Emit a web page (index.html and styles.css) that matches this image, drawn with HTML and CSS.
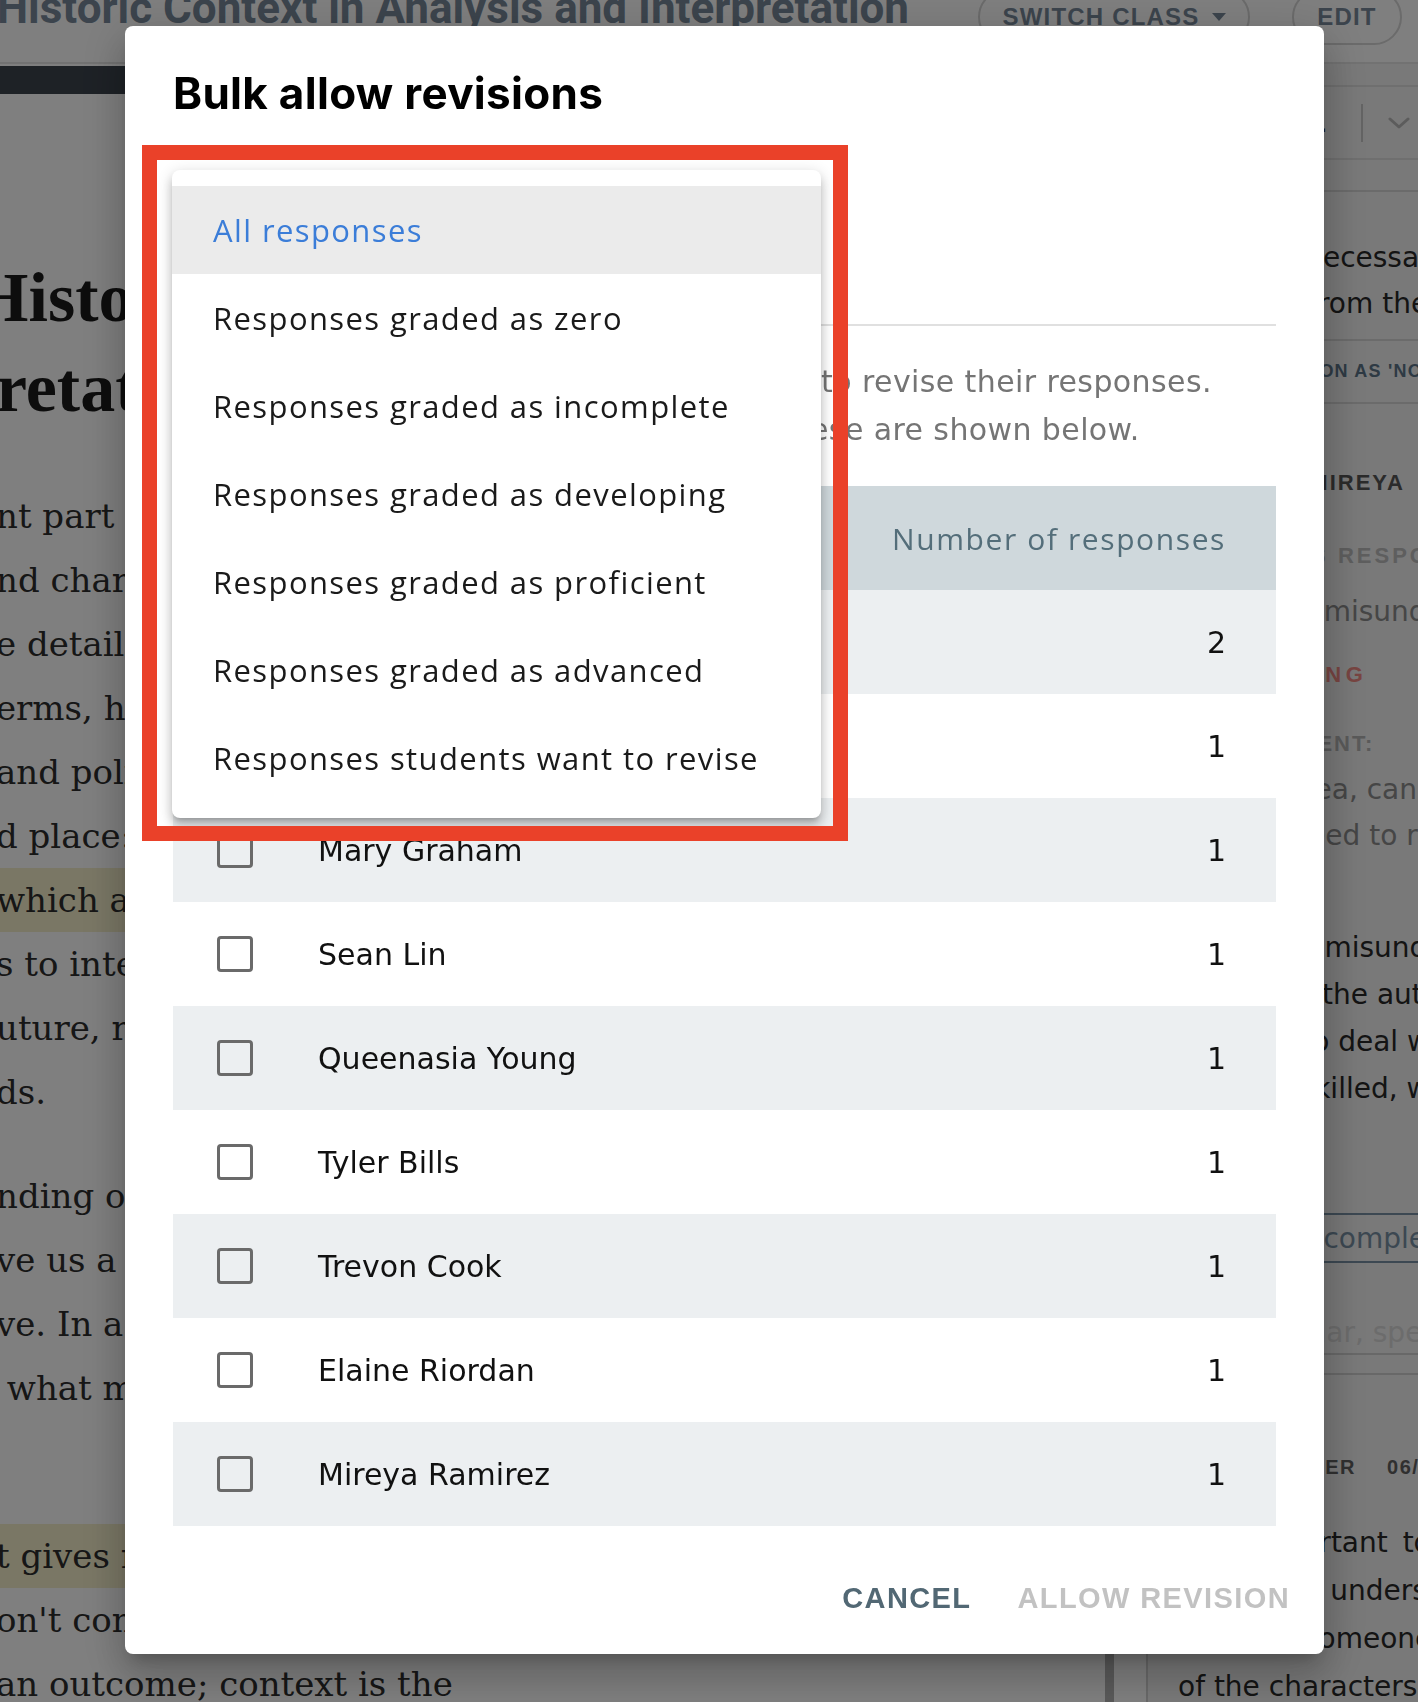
FILE: index.html
```html
<!DOCTYPE html>
<html lang="en">
<head>
<meta charset="UTF-8">
<meta name="viewport" content="width=device-width, initial-scale=1.0">
<title>Bulk allow revisions</title>
<link rel="stylesheet" href="styles.css">
</head>
<body>

<div class="page">
  <header class="topbar">
    <h2 class="course-title">Historic Context in Analysis and Interpretation</h2>
    <div class="top-actions">
      <button class="pill pill-switch">SWITCH CLASS
        <svg class="caret" width="14" height="8" viewBox="0 0 14 8"><path d="M0 0 L14 0 L7 8 Z" fill="currentColor"/></svg>
      </button>
      <button class="pill pill-edit">EDIT</button>
    </div>
  </header>

  <div class="workspace">
    <main class="reader">
      <div class="reader-bar"></div>
      <article class="article">
        <h1 class="article-title">
          <span class="cut">Historic Context in Analysis and Interp</span>
          <span>retation</span>
        </h1>
        <p>
          <span class="ln">nt part of understanding any story is knowing when</span>
          <span class="ln">nd characters exist within a particular moment in</span>
          <span class="ln">e details of setting can be broad, in general</span>
          <span class="ln">erms, historical events, the social customs,</span>
          <span class="ln">and political climate of the period. They can</span>
          <span class="ln">d place: a specific town, a house, a single room</span>
          <span class="ln mark">which a character lives or works. Knowing this</span>
          <span class="ln">s to interpret a character's choices, hopes, and</span>
          <span class="ln">uture, rather than judging them only by our</span>
          <span class="ln">ds.</span>
        </p>
        <p class="para-2">
          <span class="ln">nding of historical context can also</span>
          <span class="ln">ve us a better sense of what is at stake</span>
          <span class="ln">ve. In a story set during wartime, for</span>
          <span class="ln">&nbsp;what might seem strange to a modern</span>
        </p>
        <p class="para-3">
          <span class="ln mark">t gives meaning to the events of a story</span>
          <span class="ln">on't consider context, we might see only</span>
          <span class="ln">an outcome; context is the</span>
        </p>
      </article>
    </main>
    <div class="scroll-track"></div>
    <aside class="panel">
      <div class="panel-tabs"></div>
      <div class="panel-toolbar">
        <div class="panel-select"><span>Responses to this reading.</span></div>
        <span class="panel-divider"></span>
        <svg class="chevron" width="22" height="12" viewBox="0 0 22 12"><path d="M2 2 L11 10 L20 2" fill="none" stroke="currentColor" stroke-width="3" stroke-linecap="round" stroke-linejoin="round"/></svg>
      </div>
      <div class="panel-band"></div>
      <div class="panel-body">
        <div class="pb-text intro">
          <span class="ln">It was unnecessary for the author to</span>
          <span class="ln">far away from the main point of the</span>
        </div>
        <div class="flag-row">SET SUBMISSION AS 'NOT STARTED'</div>
        <div class="pb-caps reply">REPLY TO MIREYA</div>
        <div class="pb-caps label-light">STUDENT'S RESPONSE</div>
        <div class="pb-text muted answer">Has a key misunderstanding of the</div>
        <div class="pb-caps grade">DEVELOPING</div>
        <div class="pb-caps label-comment">ADD COMMENT:</div>
        <div class="pb-text muted comment">
          <span class="ln">A great idea, can you add more?</span>
          <span class="ln">You will need to revise this part.</span>
        </div>
        <div class="pb-text answer-body">
          <span class="ln">There is a misunderstanding here</span>
          <span class="ln">regarding the author's purpose</span>
          <span class="ln">and had to deal with the</span>
          <span class="ln">would be killed, which shows</span>
        </div>
        <div class="status-box">Marked incomplete</div>
        <div class="note-input">Fix grammar, spelling...</div>
        <div class="note-line"></div>
        <div class="pb-caps teacher">YOUR TEACHER <span class="date">06/12/2020</span></div>
        <div class="pb-text feedback">
          <span class="ln wide">It is important to think</span>
          <span class="ln">readers to understand</span>
          <span class="ln">because someone</span>
          <span class="ln">of the characters and</span>
        </div>
      </div>
    </aside>
  </div>
</div>

<div class="scrim">
  <div class="dialog">
    <div class="dialog-body">
      <h2 class="dialog-title">Bulk allow revisions</h2>
      <div class="field">
        <div class="field-label">Show</div>
        <div class="field-value">All responses</div>
      </div>
      <p class="dialog-desc">Choose which students you want to allow to revise their responses.<br>Students having responses that match these are shown below.</p>
      <table class="students">
        <thead>
          <tr>
            <th class="col-check"><span class="box"></span></th>
            <th>Student</th>
            <th class="col-count">Number of responses</th>
          </tr>
        </thead>
        <tbody>
          <tr><td class="col-check"><span class="box"></span></td><td>Jamal Carter</td><td class="col-count">2</td></tr>
          <tr><td class="col-check"><span class="box"></span></td><td>Ana Lopez</td><td class="col-count">1</td></tr>
          <tr><td class="col-check"><span class="box"></span></td><td>Mary Graham</td><td class="col-count">1</td></tr>
          <tr><td class="col-check"><span class="box"></span></td><td>Sean Lin</td><td class="col-count">1</td></tr>
          <tr><td class="col-check"><span class="box"></span></td><td>Queenasia Young</td><td class="col-count">1</td></tr>
          <tr><td class="col-check"><span class="box"></span></td><td>Tyler Bills</td><td class="col-count">1</td></tr>
          <tr><td class="col-check"><span class="box"></span></td><td>Trevon Cook</td><td class="col-count">1</td></tr>
          <tr><td class="col-check"><span class="box"></span></td><td>Elaine Riordan</td><td class="col-count">1</td></tr>
          <tr><td class="col-check"><span class="box"></span></td><td>Mireya Ramirez</td><td class="col-count">1</td></tr>
        </tbody>
      </table>
    </div>
    <div class="dialog-actions">
      <button class="text-btn btn-cancel">CANCEL</button>
      <button class="text-btn btn-allow" disabled>ALLOW REVISION</button>
    </div>

    <ul class="menu">
      <li class="active">All responses</li>
      <li>Responses graded as zero</li>
      <li>Responses graded as incomplete</li>
      <li>Responses graded as developing</li>
      <li>Responses graded as proficient</li>
      <li>Responses graded as advanced</li>
      <li>Responses students want to revise</li>
    </ul>
    <div class="callout"></div>
  </div>
</div>

</body>
</html>
```

FILE: styles.css
```css
* {
  box-sizing: border-box;
}
html, body {
  margin: 0;
  padding: 0;
}
body {
  width: 1418px;
  height: 1702px;
  overflow: hidden;
  background: #fff;
  font-family: "DejaVu Sans", sans-serif;
}

/* page behind the dialog */
.topbar {
  display: flex;
  align-items: flex-start;
  justify-content: space-between;
  margin-top: -20px;
  height: 84px;
  padding-right: 16px;
  border-bottom: 2px solid #e4e4e4;
}
.course-title {
  margin: 0 0 0 -3px;
  font: 700 44px/56px Roboto, sans-serif;
  color: #78899a;
  white-space: nowrap;
}
.top-actions {
  display: flex;
  gap: 42px;
  margin-top: 9px;
}
.pill {
  display: flex;
  align-items: center;
  justify-content: center;
  gap: 12px;
  height: 56px;
  border: 2px solid #d6d6d6;
  border-radius: 28px;
  background: none;
  font: 700 24px "Liberation Sans", sans-serif;
  letter-spacing: 1.2px;
  color: #78899a;
  padding: 0;
}
.pill-switch {
  width: 272px;
}
.pill-edit {
  width: 110px;
}

.workspace {
  display: flex;
  height: 1638px;
}
.reader {
  width: 1105px;
  flex: none;
  overflow: hidden;
}
.reader-bar {
  height: 28px;
  margin-top: 2px;
  background: #3c444d;
}
.article {
  margin-left: -4px;
  font: 34px/64px "DejaVu Serif", serif;
  color: #2d2d2d;
}
.article-title {
  margin: 159px 0 51px;
  font: 700 70px/90px "Liberation Serif", serif;
  color: #1a1a1a;
}
.article-title span {
  display: block;
  white-space: nowrap;
}
.article-title .cut {
  margin-left: -22px;
}
.article p {
  margin: 0;
}
.article .para-2 {
  margin-top: 40px;
}
.article .para-3 {
  margin-top: 104px;
}
.ln {
  display: block;
  white-space: nowrap;
}
.mark {
  background: #f5efcb;
}
.scroll-track {
  width: 9px;
  flex: none;
  background: #b4b4b4;
}

.panel {
  flex: 1;
  min-width: 0;
  margin-left: 32px;
  border-left: 2px solid #d2d2d2;
  background: #f2f2f2;
  overflow: hidden;
}
.panel-tabs {
  height: 23px;
  border-bottom: 2px solid #dedede;
}
.panel-toolbar {
  display: flex;
  align-items: center;
  height: 73px;
  padding-right: 8px;
  border-bottom: 2px solid #dedede;
  color: #282828;
  font-size: 28px;
}
.panel-select {
  flex: 1;
  min-width: 0;
  display: flex;
  justify-content: flex-end;
  white-space: nowrap;
}
.panel-select span {
  flex: none;
}
.panel-divider {
  flex: none;
  width: 2px;
  height: 38px;
  margin: 0 25px 0 33px;
  background: #c8c8c8;
}
.chevron {
  flex: none;
  color: #b8b8b8;
}
.panel-band {
  height: 32px;
  border-bottom: 2px solid #d6d6d6;
}
.panel-body {
  padding-left: 30px;
  white-space: nowrap;
}
.pb-text {
  font-size: 28px;
  line-height: 46px;
  color: #282828;
}
.pb-text.muted {
  color: #8c8c8c;
}
.pb-caps {
  font: 700 22px/30px "Liberation Sans", sans-serif;
  letter-spacing: 2px;
}
.intro {
  margin-top: 43px;
}
.flag-row {
  margin-top: 12px;
  height: 65px;
  display: flex;
  align-items: center;
  border-top: 2px solid #d6d6d6;
  border-bottom: 2px solid #d6d6d6;
  font: 700 18px "Liberation Sans", sans-serif;
  letter-spacing: 1.2px;
  color: #5c7488;
  margin-left: -30px;
  padding-left: 30px;
}
.reply {
  margin-top: 64px;
  color: #565656;
}
.label-light {
  margin-top: 43px;
  color: #bcbcbc;
  letter-spacing: 3px;
}
.answer {
  margin-top: 18px;
}
.grade {
  margin-top: 25px;
  color: #f08a84;
  letter-spacing: 4.5px;
}
.label-comment {
  margin-top: 39px;
  color: #b4b4b4;
}
.comment {
  margin-top: 8px;
}
.answer-body {
  margin-top: 65px;
  line-height: 47px;
}
.status-box {
  margin-top: 101px;
  height: 50px;
  display: flex;
  align-items: center;
  padding-left: 8px;
  border-top: 2px solid #7890a4;
  border-bottom: 2px solid #7890a4;
  font-size: 28px;
  color: #7890a4;
}
.note-input {
  margin-top: 50px;
  height: 42px;
  line-height: 40px;
  border-bottom: 2px solid #d0d0d0;
  font-size: 28px;
  color: #d8d8d8;
}
.note-line {
  margin-top: 18px;
  height: 2px;
  background: #d0d0d0;
}
.teacher {
  margin-top: 77px;
  font-size: 20px;
  letter-spacing: 1.5px;
  color: #606060;
}
.teacher .date {
  margin-left: 24px;
}
.feedback {
  margin-top: 37px;
  line-height: 48px;
}
.feedback .wide {
  word-spacing: 6px;
}

/* dialog */
.scrim {
  position: fixed;
  top: 0;
  left: 0;
  right: 0;
  bottom: 0;
  background: rgba(0, 0, 0, 0.5);
  display: flex;
  align-items: flex-start;
}
.dialog {
  position: relative;
  width: 1199px;
  height: 1628px;
  margin: 26px 0 0 125px;
  background: #fff;
  border-radius: 8px;
  box-shadow: 0 11px 15px -7px rgba(0, 0, 0, 0.2), 0 24px 38px 3px rgba(0, 0, 0, 0.14), 0 9px 46px 8px rgba(0, 0, 0, 0.12);
}
.dialog-body {
  padding: 43px 48px 0;
}
.dialog-title {
  margin: 0;
  font: 700 44px/48px Inter, sans-serif;
  letter-spacing: 0.3px;
  color: #000;
}
.field {
  height: 209px;
  padding-top: 60px;
  border-bottom: 2px solid #e0e0e0;
  font-family: "Open Sans", sans-serif;
}
.field-label {
  font-size: 24px;
  color: #757575;
}
.field-value {
  margin-top: 20px;
  font-size: 30px;
  color: #1a1a1a;
}
.dialog-desc {
  margin: 32px 0 0;
  font-size: 30px;
  line-height: 48px;
  letter-spacing: 0.4px;
  color: #757575;
  white-space: nowrap;
}
.students {
  width: 100%;
  margin-top: 32px;
  border-collapse: collapse;
}
.students th,
.students td {
  height: 104px;
  padding: 0;
  text-align: left;
}
.students th {
  font: 400 30px "Open Sans", sans-serif;
  letter-spacing: 1.6px;
  color: #546e7a;
}
.students td {
  font-size: 30px;
  color: #111;
}
.students thead tr {
  background: #cfd8dc;
}
.students tbody tr:nth-child(odd) {
  background: #eceff1;
}
.students .col-check {
  width: 145px;
  padding-left: 44px;
}
.students .col-count {
  text-align: right;
  padding-right: 50px;
}
.box {
  display: block;
  width: 36px;
  height: 36px;
  border: 3px solid #6a6a6a;
  border-radius: 4px;
}
.dialog-actions {
  display: flex;
  align-items: center;
  justify-content: flex-end;
  gap: 14px;
  height: 128px;
  padding: 16px 18px 0 0;
}
.text-btn {
  padding: 8px 16px;
  border: none;
  background: none;
  font: 700 29px "Liberation Sans", sans-serif;
  letter-spacing: 1.4px;
  cursor: pointer;
}
.btn-cancel {
  color: #526874;
}
.btn-allow {
  color: #c2c2c2;
}

/* open select menu */
.menu {
  position: absolute;
  top: 144px;
  left: 47px;
  width: 649px;
  margin: 0;
  padding: 16px 0;
  list-style: none;
  background: #fff;
  border-radius: 8px;
  box-shadow: 0 5px 5px -3px rgba(0, 0, 0, 0.2), 0 8px 10px 1px rgba(0, 0, 0, 0.14), 0 3px 14px 2px rgba(0, 0, 0, 0.12);
}
.menu li {
  height: 88px;
  display: flex;
  align-items: center;
  padding-left: 41px;
  font: 31px "Open Sans", sans-serif;
  letter-spacing: 1.4px;
  color: #1a1a1a;
}
.menu li.active {
  background: #ebebeb;
  color: #3b7dd8;
}
.callout {
  position: absolute;
  top: 119px;
  left: 17px;
  width: 706px;
  height: 696px;
  border: 15px solid #ea4129;
}
```
